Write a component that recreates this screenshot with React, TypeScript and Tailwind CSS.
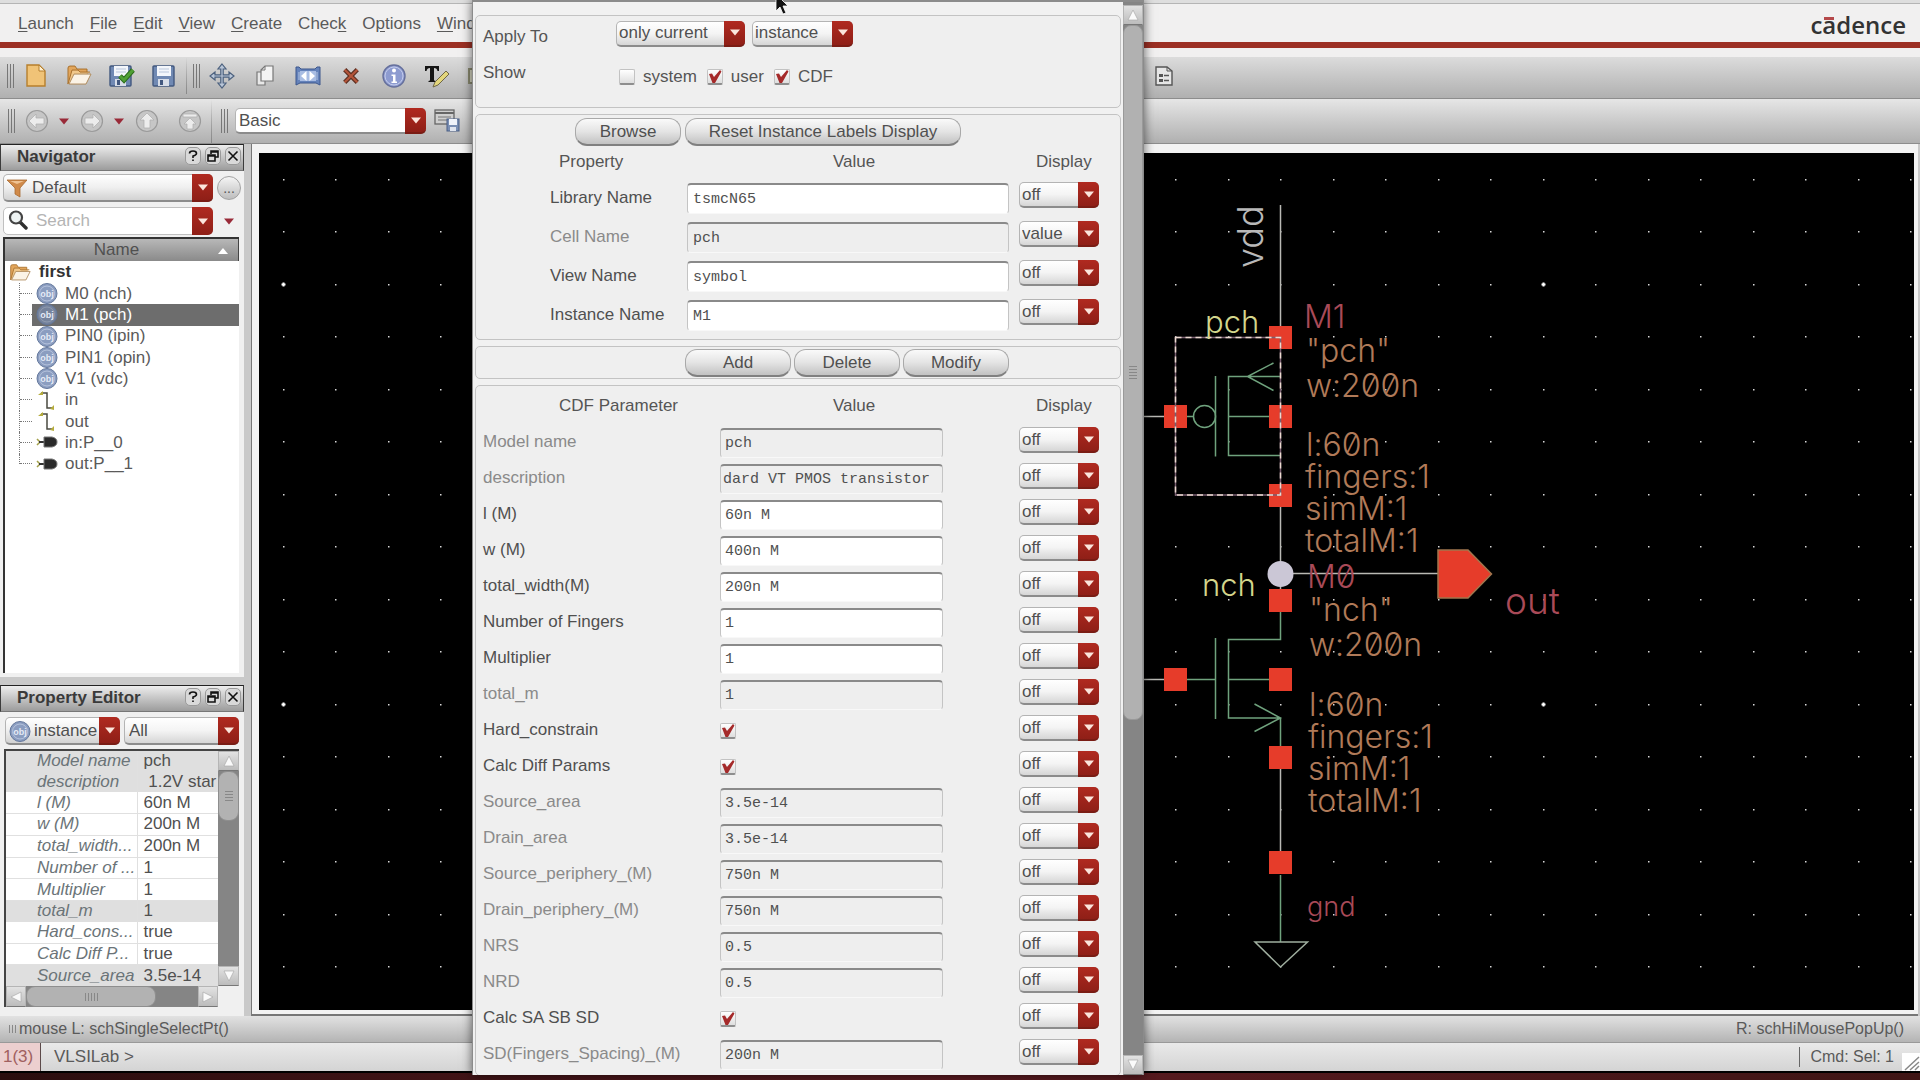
import React, { useState } from 'react';

type Param = {
  label: string;
  value?: string;
  disabled?: boolean;
  check?: boolean;
  display?: string;
};

const MENUS: [string, number][] = [
  ['Launch', 0],
  ['File', 0],
  ['Edit', 0],
  ['View', 0],
  ['Create', 0],
  ['Check', 4],
  ['Options', 1],
  ['Wind', 0],
];

const PROPERTIES: Param[] = [
  { label: 'Library Name', value: 'tsmcN65' },
  { label: 'Cell Name', value: 'pch', disabled: true, display: 'value' },
  { label: 'View Name', value: 'symbol' },
  { label: 'Instance Name', value: 'M1' },
];

const CDF_PARAMS: Param[] = [
  { label: 'Model name', value: 'pch', disabled: true },
  { label: 'description', value: 'dard VT PMOS transistor', disabled: true },
  { label: 'l (M)', value: '60n M' },
  { label: 'w (M)', value: '400n M' },
  { label: 'total_width(M)', value: '200n M' },
  { label: 'Number of Fingers', value: '1' },
  { label: 'Multiplier', value: '1' },
  { label: 'total_m', value: '1', disabled: true },
  { label: 'Hard_constrain', check: true },
  { label: 'Calc Diff Params', check: true },
  { label: 'Source_area', value: '3.5e-14', disabled: true },
  { label: 'Drain_area', value: '3.5e-14', disabled: true },
  { label: 'Source_periphery_(M)', value: '750n M', disabled: true },
  { label: 'Drain_periphery_(M)', value: '750n M', disabled: true },
  { label: 'NRS', value: '0.5', disabled: true },
  { label: 'NRD', value: '0.5', disabled: true },
  { label: 'Calc SA SB SD', check: true },
  { label: 'SD(Fingers_Spacing)_(M)', value: '200n M', disabled: true },
];

const TREE = [
  { name: 'M0 (nch)', kind: 'obj' },
  { name: 'M1 (pch)', kind: 'obj', selected: true },
  { name: 'PIN0 (ipin)', kind: 'obj' },
  { name: 'PIN1 (opin)', kind: 'obj' },
  { name: 'V1 (vdc)', kind: 'obj' },
  { name: 'in', kind: 'net' },
  { name: 'out', kind: 'net' },
  { name: 'in:P__0', kind: 'pin' },
  { name: 'out:P__1', kind: 'pin' },
];

const EDITOR_ROWS: [string, string, boolean][] = [
  ['Model name', 'pch', true],
  ['description', '\u00a01.2V star', true],
  ['l (M)', '60n M', false],
  ['w (M)', '200n M', false],
  ['total_width...', '200n M', false],
  ['Number of ...', '1', false],
  ['Multiplier', '1', false],
  ['total_m', '1', true],
  ['Hard_cons...', 'true', false],
  ['Calc Diff P...', 'true', false],
  ['Source_area', '3.5e-14', true],
];

/* ---------- small icons ---------- */

const ObjIcon = ({ dim = false }: { dim?: boolean }) => (
  <svg width="22" height="21" viewBox="0 0 22 21" className="shrink-0">
    <circle cx="11" cy="10.5" r="10" fill={dim ? '#76839c' : '#8b9dc0'} stroke="#64789c" strokeWidth="1" />
    <circle cx="11" cy="10.5" r="7.5" fill="none" stroke={dim ? '#8f9bb0' : '#b5c2dc'} strokeWidth="1" />
    <text x="11" y="14" textAnchor="middle" fontFamily="Liberation Sans, sans-serif" fontSize="9" fontWeight="bold" fill="#e4eaf5">obj</text>
  </svg>
);

const NetIcon = () => (
  <svg width="22" height="21" viewBox="0 0 22 21" className="shrink-0">
    <path d="M5 3H11V18H18" fill="none" stroke="#4a4a40" strokeWidth="1.5" />
    <path d="M2 5L7 1V5ZM14 19L18 15V20Z" fill="#b5ac3c" />
  </svg>
);

const PinIcon = () => (
  <svg width="22" height="21" viewBox="0 0 22 21" className="shrink-0">
    <path d="M1 7L4 10L1 13" fill="none" stroke="#a3a04a" strokeWidth="1.5" />
    <path d="M3 10H9" stroke="#333" strokeWidth="2" />
    <path d="M8 5H16Q21 6 21 10Q21 14 16 15H8Z" fill="#2a2a2a" stroke="#777" strokeWidth="1" />
  </svg>
);

const FolderIcon = ({ size = 22 }: { size?: number }) => (
  <svg width={size} height={size * 0.85} viewBox="0 0 26 22" className="shrink-0">
    <path d="M2 20V4Q2 2 4 2H9L11 5H21V10" fill="#e2a65c" stroke="#a8702c" strokeWidth="1" />
    <path d="M2 20L6 6H12L14 8H24" fill="#f1c88b" stroke="#a8702c" strokeWidth="1" />
    <path d="M3 20L8 10H25L20 20Z" fill="#fbf3e6" stroke="#b08b5c" strokeWidth="1" />
  </svg>
);

const FileIcon = () => (
  <svg width="20" height="23" viewBox="0 0 20 23">
    <path d="M1 1H13L19 7V22H1Z" fill="#f0c377" stroke="#b67f2d" strokeWidth="1.4" />
    <path d="M13 1V7H19Z" fill="#fff0d0" stroke="#b67f2d" strokeWidth="1" />
  </svg>
);

const DiskIcon = ({ checked = false }: { checked?: boolean }) => (
  <svg width="26" height="24" viewBox="0 0 26 24">
    <rect x="1" y="2" width="21" height="20" rx="1" fill="#7089b3" stroke="#42587f" strokeWidth="1.4" />
    <rect x="5" y="2" width="14" height="10" fill="#f3f6fb" />
    <path d="M7 5H17M7 8H17" stroke="#b9c6db" strokeWidth="1" />
    <rect x="6" y="15" width="11" height="7" fill="#d7dde8" />
    <rect x="8" y="16" width="3" height="5" fill="#42587f" />
    {checked && <path d="M11 12L15 16L24 6" fill="none" stroke="#2c6b1c" strokeWidth="5" />}
    {checked && <path d="M11 12L15 16L24 6" fill="none" stroke="#4fa035" strokeWidth="3" />}
  </svg>
);

const MoveIcon = () => (
  <svg width="26" height="26" viewBox="0 0 26 26">
    <path
      d="M13 1L17 6H14.200V11.800H20V9L25 13L20 17V14.200H14.200V20H17L13 25L9 20H11.800V14.200H6V17L1 13L6 9V11.800H11.800V6H9Z"
      fill="#b9c6d8"
      stroke="#4c617e"
      strokeWidth="1.2"
    />
  </svg>
);

const CopyIcon = () => (
  <svg width="18" height="22" viewBox="0 0 18 22">
    <path d="M1 7H9V20H1Z" fill="#e8e8e8" stroke="#777" strokeWidth="1.2" />
    <path d="M5 5L9 1H17V16H5Z" fill="#f4f4f4" stroke="#777" strokeWidth="1.2" />
    <path d="M5 5H9V1" fill="none" stroke="#777" strokeWidth="1" />
  </svg>
);

const StretchIcon = () => (
  <svg width="26" height="20" viewBox="0 0 26 20">
    <path d="M1 1H4L6 3H20L22 1H25V19L21 17H5L1 19Z" fill="#6482ba" stroke="#3d578c" strokeWidth="1" />
    <path d="M4 6V14M22 6V14" stroke="#b8c8e4" strokeWidth="1" />
    <rect x="5" y="5" width="16" height="10" fill="#a9bde3" />
    <path d="M11.500 5V15L6 10ZM14.500 5V15L20 10Z" fill="#fff" />
  </svg>
);

const DeleteIcon = () => (
  <svg width="18" height="18" viewBox="0 0 20 20">
    <path d="M3 3L17 17M17 3L3 17" stroke="#5e3022" strokeWidth="5" />
    <path d="M3 3L17 17M17 3L3 17" stroke="#b4553a" strokeWidth="2.4" />
  </svg>
);

const InfoIcon = () => (
  <svg width="24" height="24" viewBox="0 0 24 24">
    <circle cx="12" cy="12" r="11" fill="#8d9bd0" stroke="#66709c" strokeWidth="1.4" />
    <circle cx="12" cy="12" r="9" fill="none" stroke="#c4cceb" strokeWidth="1" />
    <circle cx="12" cy="6.5" r="2" fill="#fff" />
    <path d="M9.5 10.5H13.5V17.5H15V19H9.5V17.5H11V12H9.5Z" fill="#fff" />
  </svg>
);

const EditTextIcon = () => (
  <svg width="26" height="26" viewBox="0 0 26 26">
    <path d="M1 3H15V8H13.5Q13 5 10 5V17Q10 18 12 18V19H4.500V18Q6 18 6 17V5Q3 5 2.500 8H1Z" fill="#151515" />
    <path d="M9 24L11 19L22 8L25 11L14 22Z" fill="#e3d67c" stroke="#6e6646" strokeWidth="1" />
  </svg>
);

const NavArrow = ({ d }: { d: string }) => (
  <svg width="24" height="24" viewBox="0 0 24 24">
    <circle cx="12" cy="12" r="10.500" fill="#c6c6c6" stroke="#9a9a9a" strokeWidth="1.2" />
    <path d={d} fill="#ececec" stroke="#adadad" strokeWidth="0.7" />
  </svg>
);

const FormSaveIcon = () => (
  <svg width="27" height="24" viewBox="0 0 27 24">
    <rect x="1" y="1" width="19" height="14" fill="#cfcfcf" stroke="#666" strokeWidth="1.3" />
    <path d="M1 4H20" stroke="#666" strokeWidth="2" />
    <path d="M4 8H17M4 11H13" stroke="#777" strokeWidth="1.2" />
    <rect x="13" y="10" width="12" height="12" fill="#7a8fb4" stroke="#4b5f85" strokeWidth="1" />
    <rect x="15" y="10" width="8" height="6" fill="#eff3fa" />
    <rect x="16" y="18" width="6" height="4" fill="#dfe4ee" />
  </svg>
);

const ReportIcon = () => (
  <svg width="18" height="20" viewBox="0 0 18 20">
    <path d="M1 1H12L17 5V19H1Z" fill="#e6e6e6" stroke="#555" strokeWidth="1.4" />
    <path d="M12 1V5H17" fill="none" stroke="#555" strokeWidth="1" />
    <path d="M4 8H8V11H4ZM4 13H8V16H4Z" fill="#555" />
    <path d="M9 9.500H14M9 14.500H14" stroke="#555" strokeWidth="1.5" />
  </svg>
);

const Triangle = ({ className }: { className: string }) => (
  <svg width="10" height="7" viewBox="0 0 10 7" className={className}>
    <path d="M0 0.500H10L5 6.500Z" fill="currentColor" />
  </svg>
);

/* ---------- controls ---------- */

const Select = ({
  label,
  value,
  className,
  field = 'bg-gradient-to-b from-white via-[#f4f4f4] to-[#d6d6d6] pl-1',
  icon,
}: {
  label: string;
  value: string;
  className: string;
  field?: string;
  icon?: React.ReactNode;
}) => (
  <span className={`relative flex shrink-0 ${className}`}>
    <select
      aria-label={label}
      defaultValue={value}
      className={`w-full h-full appearance-none rounded-[5px] border border-[#b4b4b4] border-b-2 border-b-[#8c8c8c] text-[17px] leading-5 text-[#505050] outline-none ${field}`}
    >
      <option>{value}</option>
    </select>
    <span className="pointer-events-none absolute inset-y-0 right-0 flex w-[21px] items-center justify-center rounded-r-[5px] border-b-2 border-[#7a1c14] bg-gradient-to-b from-[#b02a20] to-[#8f1f17] text-[#fbe5dc]">
      <Triangle className="block" />
    </span>
    {icon && <span className="pointer-events-none absolute inset-y-0 left-1 flex items-center">{icon}</span>}
  </span>
);

const CheckBox = ({ id, defaultChecked }: { id: string; defaultChecked: boolean }) => {
  const [on, setOn] = useState(defaultChecked);
  return (
    <span className="relative block h-4 w-4 shrink-0">
      <input
        id={id}
        type="checkbox"
        checked={on}
        onChange={() => setOn(!on)}
        className="block h-4 w-4 appearance-none rounded-[2px] border border-[#c2c2c2] border-b-2 border-b-[#8e8e8e] bg-gradient-to-b from-white to-[#dedede]"
      />
      {on && (
        <svg width="16" height="16" viewBox="0 0 16 16" className="pointer-events-none absolute inset-0">
          <path d="M2 5L5 4.500L7 8L13 1L14.500 2.500L8 14H5.500Z" fill="#a52a2a" />
        </svg>
      )}
    </span>
  );
};

const PillButton = ({ children, className }: { children: string; className: string }) => (
  <button
    className={`h-7 shrink-0 rounded-[12px] border border-[#a9a9a9] border-b-2 border-b-[#808080] bg-gradient-to-b from-[#fafafa] via-[#e4e4e4] to-[#c2c2c2] text-[17px] leading-5 text-[#505050] ${className}`}
  >
    {children}
  </button>
);

const Handle = () => (
  <span className="flex h-6 w-[7px] shrink-0 justify-between">
    <span className="w-px bg-[#777]" />
    <span className="w-px bg-[#777]" />
    <span className="w-px bg-[#777]" />
  </span>
);

const Tool = ({ name, children }: { name: string; children: React.ReactNode }) => (
  <button aria-label={name} className="flex h-8 w-[43px] shrink-0 items-center justify-center">
    {children}
  </button>
);

const MenuArrow = ({ name }: { name: string }) => (
  <button aria-label={name} className="flex w-3 shrink-0 justify-center text-[#992a38]">
    <Triangle className="block" />
  </button>
);

const DockTitle = ({ title }: { title: string }) => (
  <div className="flex h-[27px] shrink-0 items-start gap-1 border border-[#3c3c3c] border-t-[#222] border-b-[#777] bg-gradient-to-b from-[#eeeeee] to-[#9c9c9c] pl-4 pr-[2px] pt-[2px]">
    <h2 className="flex-1 text-[17px] font-bold leading-5 text-[#3a3a3a]">{title}</h2>
    {[
      ['Help', <path key="h" d="M5.500 6.500Q5.500 4 9 4Q12.500 4 12.500 6.500Q12.500 8 9 9V11M9 12.500V14" />],
      ['Float', <path key="f" d="M7 7V4H14V10H11M4 8H11V14H4ZM4 9H11M7 5H14" />],
      ['Close', <path key="c" d="M4.500 4.500L13.500 13.500M13.500 4.500L4.500 13.500" />],
    ].map(([name, icon]) => (
      <button
        key={name as string}
        aria-label={name as string}
        className="flex h-[18px] w-4 items-center justify-center rounded-[5px] border border-[#9a9a9a] bg-[#d9d9d9]"
      >
        <svg width="18" height="18" viewBox="0 0 18 18" fill="none" stroke="#111" strokeWidth="1.600" className="shrink-0">
          {icon}
        </svg>
      </button>
    ))}
  </div>
);

const ScrollButton = ({ name, d, className = 'h-5 w-full' }: { name: string; d: string; className?: string }) => (
  <button
    aria-label={name}
    className={`flex shrink-0 items-center justify-center border border-[#b5b5b5] border-b-[#777] bg-gradient-to-b from-[#e2e2e2] to-[#bcbcbc] ${className}`}
  >
    <svg width="12" height="12" viewBox="0 0 12 12" className="shrink-0">
      <path d={d} fill="#fafafa" stroke="#aaa" strokeWidth="0.700" />
    </svg>
  </button>
);

/* ---------- left docks ---------- */

const Navigator = () => (
  <section className="flex min-h-0 flex-1 flex-col bg-[#f0f0f0] pb-1">
    <DockTitle title="Navigator" />
    <div className="flex items-center gap-1 pl-[3px] pt-[3px]">
      <Select
        label="Filter"
        value="Default"
        className="h-7 w-[210px]"
        field="bg-gradient-to-b from-white via-[#efefef] to-[#d2d2d2] pl-[28px]"
        icon={
          <svg width="20" height="20" viewBox="0 0 20 20">
            <path d="M0 2H20L13 10V19L8 16V10Z" fill="#d08a4a" stroke="#a86a30" strokeWidth="0.800" />
            <path d="M3 3H17L10 6Z" fill="#f0c393" />
          </svg>
        }
      />
      <button aria-label="More filters" className="h-6 w-6 rounded-full border border-[#a2a2a2] bg-gradient-to-b from-[#f5f5f5] to-[#bdbdbd] text-[14px] leading-5 text-[#555]">
        ...
      </button>
    </div>
    <div className="flex items-center pl-[3px] pt-[5px]">
      <div className="relative flex h-7 w-[210px]">
        <input
          aria-label="Search"
          placeholder="Search"
          className="w-full rounded-[5px] border border-[#c0c0c0] bg-white pl-8 text-[17px] leading-5 outline-none placeholder:text-[#b4b4b4]"
        />
        <svg width="20" height="20" viewBox="0 0 20 20" className="absolute left-[5px] top-[3px]">
          <path d="M12 12L18 18" stroke="#2f2f2f" strokeWidth="3.400" strokeLinecap="round" />
          <circle cx="8" cy="7.500" r="6" fill="#eef3f3" stroke="#444" strokeWidth="2.200" />
        </svg>
        <button aria-label="Search history" className="absolute inset-y-0 right-0 flex w-[21px] items-center justify-center rounded-r-[5px] bg-gradient-to-b from-[#b02a20] to-[#8f1f17] text-[#fbe5dc]">
          <Triangle className="block" />
        </button>
      </div>
      <span className="ml-[10px] flex">
        <MenuArrow name="Search options" />
      </span>
    </div>
    <div className="ml-[3px] mr-[5px] mt-[2px] flex min-h-0 flex-1 flex-col border-l-2 border-t-2 border-[#333] bg-white">
      <div className="relative flex h-[22px] shrink-0 items-center justify-center border-r border-[#444] bg-gradient-to-b from-[#b8b8b8] to-[#8a8a8a] pr-[10px] text-[17px] leading-5 text-[#505050]">
        Name
        <svg width="12" height="8" viewBox="0 0 12 8" className="absolute right-[9px] top-2">
          <path d="M1 7H11L6 1Z" fill="#fff" />
        </svg>
      </div>
      <div className="flex h-[22px] shrink-0 items-center gap-2 pl-1 font-bold text-[#333]">
        <FolderIcon />
        <span className="text-[17px] leading-5">first</span>
      </div>
      <ul className="grid h-[192px] shrink-0 auto-rows-fr">
        {TREE.map((n, i) => (
          <li key={n.name} className="flex pl-[14px]">
            <span className={`w-[13px] border-l border-dotted border-[#777] ${i === TREE.length - 1 ? 'h-1/2' : 'h-full'}`}>
              <span className={`block border-b border-dotted border-[#777] ${i === TREE.length - 1 ? 'h-full' : 'h-1/2'}`} />
            </span>
            <span className={`flex flex-1 items-center gap-[7px] pl-1 text-[17px] leading-5 ${n.selected ? 'bg-[#6d6d6d] text-white' : 'text-[#5a5a5a]'}`}>
              {n.kind === 'obj' && <ObjIcon dim={n.selected} />}
              {n.kind === 'net' && <NetIcon />}
              {n.kind === 'pin' && <PinIcon />}
              {n.name}
            </span>
          </li>
        ))}
      </ul>
    </div>
  </section>
);

const PropertyEditor = () => (
  <section className="flex h-[331px] shrink-0 flex-col bg-[#f0f0f0]">
    <DockTitle title="Property Editor" />
    <div className="flex gap-1 pl-[5px] pt-[5px]">
      <Select
        label="Object type"
        value="instance"
        className="h-7 w-[115px]"
        field="bg-gradient-to-b from-white via-[#efefef] to-[#d2d2d2] pl-[28px]"
        icon={<ObjIcon />}
      />
      <Select label="Filter properties" value="All" className="h-7 w-[115px]" />
    </div>
    <div className="ml-1 mr-[5px] mt-1 border-l-2 border-t-2 border-[#444]">
      <div className="flex">
        <table className="h-[235px] flex-1 table-fixed border-collapse text-[17px] leading-5">
          <tbody>
            {EDITOR_ROWS.map(([name, value, grey]) => (
              <tr key={name} className={grey ? 'bg-[#dfdfdf]' : 'border-b border-[#e0e0e0] bg-white'}>
                <th scope="row" className="w-[131px] overflow-hidden whitespace-nowrap border-r border-[#e0e0e0] p-0 pl-[31px] text-left font-normal italic text-[#6b7478]">
                  {name}
                </th>
                <td className="overflow-hidden whitespace-nowrap p-0 pl-[6px] text-[#505050]">{value}</td>
              </tr>
            ))}
          </tbody>
        </table>
        <div className="flex w-[21px] shrink-0 flex-col bg-[#858585]">
          <ScrollButton name="Scroll up" d="M1 11H11L6 1Z" />
          <div className="flex h-[50px] flex-col items-center justify-center gap-[2px] rounded-[9px] border border-[#8e8e8e] bg-[#b2b2b2]">
            {[0, 1, 2, 3].map((i) => (
              <span key={i} className="h-px w-2 bg-[#888]" />
            ))}
          </div>
          <div className="flex-1" />
          <ScrollButton name="Scroll down" d="M1 1H11L6 11Z" />
        </div>
      </div>
      <div className="mr-[21px] flex h-[21px] bg-[#858585]">
        <ScrollButton name="Scroll left" d="M11 1V11L1 6Z" className="h-full w-5" />
        <div className="flex w-[130px] items-center justify-center gap-[2px] rounded-[9px] border border-[#8e8e8e] bg-[#b2b2b2]">
          {[0, 1, 2, 3, 4].map((i) => (
            <span key={i} className="h-2 w-px bg-[#888]" />
          ))}
        </div>
        <div className="flex-1" />
        <ScrollButton name="Scroll right" d="M1 1V11L11 6Z" className="h-full w-5" />
      </div>
    </div>
  </section>
);

/* ---------- schematic ---------- */

const STEP = 52.5;

const GridDots = () => {
  const dots = [];
  for (let r = 0; r < 16; r++) {
    for (let c = 0; c < 32; c++) {
      const major = c % 24 === 0 && (r === 2 || r === 10);
      const x = Math.floor(283 + c * STEP);
      const y = Math.floor(179 + r * STEP);
      dots.push(
        major ? (
          <path key={`${r}-${c}`} d={`M${x - 1.5} ${y + 0.5}h4M${x + 0.5} ${y - 1.5}v4`} stroke="#fff" strokeWidth="2" />
        ) : (
          <rect key={`${r}-${c}`} x={x} y={y} width="1.500" height="1.500" fill="#d8d8d8" />
        )
      );
    }
  }
  return <>{dots}</>;
};

const DEVICE_TEXT: [number, number, string][] = [
  [1306, 362, '"pch"'],
  [1306, 397, 'w:200n'],
  [1306, 456, 'l:60n'],
  [1305, 488, 'fingers:1'],
  [1305, 520, 'simM:1'],
  [1305, 552, 'totalM:1'],
  [1309, 621, '"nch"'],
  [1309, 656, 'w:200n'],
  [1309, 716, 'l:60n'],
  [1308, 748, 'fingers:1'],
  [1308, 780, 'simM:1'],
  [1308, 812, 'totalM:1'],
];

const TERMINALS = [
  [1281, 338],
  [1281, 417],
  [1281, 496],
  [1176, 417],
  [1281, 601],
  [1281, 680],
  [1176, 680],
  [1281, 758],
  [1281, 863],
];

const Schematic = () => (
  <svg width="100%" height="100%" className="block font-['Inter','Noto_Sans',sans-serif] font-light" role="img" aria-label="Schematic">
    <g transform="translate(-259 -153)">
      <GridDots />
      <g fill="none" stroke="#b9b9b4" strokeWidth="1.500">
        <path d="M1280.500 205V338M1280.500 496V601M1280.500 573.500H1438M1280.500 758V863M1100 416.500H1176M1100 679.500H1176" />
      </g>
      <g fill="none" stroke="#6fa27d" strokeWidth="1.500">
        <path d="M1187 416.500H1193.500M1215.500 376V456.500M1280.500 376.500H1228.500V455.500H1280.500M1228.500 416.500H1270M1273.500 363L1247.500 376.500L1273.500 390.500" />
        <circle cx="1204.500" cy="416.500" r="11" />
        <path d="M1280.500 601V639.500H1228.500V718H1280.500V758M1215.500 638V719M1187 679.500H1215.500M1228.500 679.500H1270M1254.500 704L1280.500 718L1254.500 731.500" />
        <path d="M1280.500 875V942" />
      </g>
      <path d="M1255 942H1307.500L1280.500 967Z" fill="none" stroke="#9fae9f" strokeWidth="1.500" />
      {TERMINALS.map(([x, y]) => (
        <rect key={`${x}-${y}`} x={x - 12} y={y - 12} width="23" height="23" fill="#e63c2a" />
      ))}
      <rect x="1175.500" y="337.500" width="105" height="157.500" fill="none" stroke="#7a5f72" strokeWidth="1.500" />
      <rect x="1175.500" y="337.500" width="105" height="157.500" fill="none" stroke="#ecd9cf" strokeWidth="1.500" strokeDasharray="6 4" />
      <circle cx="1280.500" cy="574" r="13" fill="#cbc7d6" />
      <path d="M1438 550H1468L1491.500 574L1468 598H1438Z" fill="#e63c2a" stroke="#a0764e" strokeWidth="1.500" />
      <g style={{ fontFeatureSettings: '"zero"' }}>
        <g fill="#a94a58" fontSize="32">
          <text x="1304" y="328">M1</text>
          <text x="1307" y="588">M0</text>
          <text x="1505" y="614" fontSize="37">out</text>
          <text x="1307" y="916" fontSize="27">gnd</text>
        </g>
        <g fill="#b07a58" fontSize="32">
          {DEVICE_TEXT.map(([x, y, t]) => (
            <text key={y} x={x} y={y}>{t}</text>
          ))}
        </g>
        <g fill="#d3d68c" fontSize="31">
          <text x="1205" y="333">pch</text>
          <text x="1202" y="596">nch</text>
        </g>
        <text transform="translate(1263 268) rotate(-90)" fill="#b9b9b9" fontSize="36">vdd</text>
      </g>
    </g>
  </svg>
);

/* ---------- edit properties dialog ---------- */

const FORM_FIELD = 'bg-gradient-to-b from-white via-[#f4f4f4] to-[#d6d6d6] pl-[2px]';

const ParamRow = ({ param, wide = false }: { param: Param; wide?: boolean }) => {
  const id = `param-${param.label.replace(/\W+/g, '-')}`;
  return (
    <div className={`flex items-start ${wide ? 'h-[39px] pl-[74px]' : 'h-9 pl-[7px]'}`}>
      <label
        htmlFor={id}
        className={`shrink-0 whitespace-nowrap text-[17px] leading-5 ${wide ? 'w-[137px] pt-[6px]' : 'w-[237px] pt-[5px]'} ${param.disabled ? 'text-[#8a8a8a]' : 'text-[#505050]'}`}
      >
        {param.label}
      </label>
      {param.check ? (
        <span className="flex w-[223px] shrink-0 pt-2">
          <CheckBox id={id} defaultChecked />
        </span>
      ) : (
        <input
          id={id}
          defaultValue={param.value}
          readOnly={param.disabled}
          className={`mt-px shrink-0 rounded-[4px] border border-x-[#c4c4c4] border-t-2 border-t-[#8a8a8a] border-b-[#f8f8f8] font-['Liberation_Mono',monospace] text-[15px] leading-5 text-[#505050] outline-none ${wide ? 'h-[31px] w-[322px] pl-[5px]' : 'h-[30px] w-[223px]'} ${wide ? '' : param.label === 'description' ? 'pl-[2px]' : 'pl-1'} ${param.disabled ? 'bg-[#eeeeee]' : 'bg-white'}`}
        />
      )}
      <Select
        label={`${param.label} display`}
        value={param.display ?? 'off'}
        className={`h-[26px] w-20 ${wide ? 'ml-[10px]' : 'ml-[76px]'}`}
        field={FORM_FIELD}
      />
    </div>
  );
};

const PANEL = 'rounded-[5px] border border-[#c3c3c3] bg-[#efefef]';

const Headings = ({ first }: { first: string }) => (
  <div className="flex pl-[83px] text-[17px] leading-5 text-[#555]">
    <span className="w-[274px]">{first}</span>
    <span className="w-[203px]">Value</span>
    <span>Display</span>
  </div>
);

const PropertiesDialog = () => (
  <form
    aria-label="Edit Object Properties"
    className="absolute bottom-[5px] left-[472px] top-0 flex w-[672px] overflow-hidden border-x border-t-2 border-[#8b8b8b] bg-[#f1f1f1] shadow-[0_0_10px_rgba(0,0,0,0.6)]"
  >
    <div className="flex min-w-0 flex-1 flex-col gap-[6px] pl-[2px] pr-[2px] pt-[13px]">
      <div className={`${PANEL} h-[93px] shrink-0 pl-[7px] pt-1`}>
        <div className="flex items-center">
          <span className="w-[133px] pt-[7px] text-[17px] leading-5 text-[#555]">Apply To</span>
          <Select label="Apply to scope" value="only current" className="h-[26px] w-[129px]" field={FORM_FIELD} />
          <span className="ml-[7px]">
            <Select label="Apply to kind" value="instance" className="h-[26px] w-[101px]" field={FORM_FIELD} />
          </span>
        </div>
        <div className="flex pt-4 text-[17px] leading-5 text-[#555]">
          <span className="w-[136px]">Show</span>
          <div className="flex gap-[10px] pt-1">
            <label htmlFor="show-system" className="flex items-center gap-2">
              <CheckBox id="show-system" defaultChecked={false} />
              system
            </label>
            <label htmlFor="show-user" className="flex items-center gap-2">
              <CheckBox id="show-user" defaultChecked />
              user
            </label>
            <label htmlFor="show-cdf" className="flex items-center gap-2">
              <CheckBox id="show-cdf" defaultChecked />
              CDF
            </label>
          </div>
        </div>
      </div>

      <div className={`${PANEL} h-[226px] shrink-0 pt-[3px]`}>
        <div className="flex gap-1 pl-[99px]">
          <PillButton className="w-[106px]">Browse</PillButton>
          <PillButton className="w-[276px]">Reset Instance Labels Display</PillButton>
        </div>
        <div className="pb-[10px] pt-[6px]">
          <Headings first="Property" />
        </div>
        {PROPERTIES.map((p) => (
          <ParamRow key={p.label} param={p} wide />
        ))}
      </div>

      <div className={`${PANEL} flex h-[33px] shrink-0 gap-[3px] pl-[209px] pt-[2px]`}>
        <PillButton className="w-[106px]">Add</PillButton>
        <PillButton className="w-[106px]">Delete</PillButton>
        <PillButton className="w-[106px]">Modify</PillButton>
      </div>

      <div className={`${PANEL} flex-1 pt-[10px]`}>
        <div className="pb-[11px]">
          <Headings first="CDF Parameter" />
        </div>
        {CDF_PARAMS.map((p) => (
          <ParamRow key={p.label} param={p} />
        ))}
      </div>
    </div>
    <div className="flex w-5 shrink-0 flex-col bg-[#858585] pt-[3px]">
      <ScrollButton name="Scroll up" d="M1 11H11L6 1Z" />
      <div className="flex h-[695px] flex-col items-center justify-center gap-[2px] rounded-[8px] border border-[#999] bg-[#b1b1b1]">
        {[0, 1, 2, 3, 4].map((i) => (
          <span key={i} className="h-px w-2 bg-[#888]" />
        ))}
      </div>
      <div className="flex-1" />
      <ScrollButton name="Scroll down" d="M1 1H11L6 11Z" />
    </div>
  </form>
);

/* ---------- window ---------- */

const TOOLBAR = 'flex shrink-0 items-center border-b border-[#8d8d8d]';

const App: React.FC = () => {
  return (
    <div className="relative flex h-screen flex-col overflow-hidden bg-[#c9c9c9] font-['Liberation_Sans',Arial,sans-serif]">
      <header className="shrink-0 bg-[#f1f0f0]">
        <div className="h-1 border-b border-[#b5b5b5] bg-[#dedede]" />
        <div className="flex h-[38px] items-center justify-between pl-[18px] pr-[14px] pt-[2px]">
          <nav className="flex gap-4 text-[17px] leading-5 text-[#5a5a5a]">
            {MENUS.map(([name, key]) => (
              <button key={name}>
                {name.slice(0, key)}
                <span className="underline underline-offset-2">{name[key]}</span>
                {name.slice(key + 1)}
              </button>
            ))}
          </nav>
          <span className="pt-[2px] font-['Open_Sans','Noto_Sans',sans-serif] text-[24px] font-semibold leading-8 text-[#333]">
            c
            <span className="relative">
              ā<span className="absolute inset-x-[2px] top-[9px] h-[3px] bg-[#b5484a]" />
            </span>
            dence
          </span>
        </div>
        <div className="h-[6px] bg-[#9c3024]" />
        <div className="h-[9px]" />
      </header>

      <div className={`${TOOLBAR} h-[42px] bg-gradient-to-b from-[#dcdcdc] to-[#b0b0b0] pb-1 pl-[7px]`}>
        <Handle />
        <Tool name="New"><FileIcon /></Tool>
        <Tool name="Open"><FolderIcon size={26} /></Tool>
        <Tool name="Check and Save"><DiskIcon checked /></Tool>
        <Tool name="Save"><DiskIcon /></Tool>
        <span className="mr-[6px] h-full w-px bg-gradient-to-b from-transparent to-[#888]" />
        <Handle />
        <Tool name="Move"><MoveIcon /></Tool>
        <Tool name="Copy"><CopyIcon /></Tool>
        <Tool name="Stretch"><StretchIcon /></Tool>
        <Tool name="Delete"><DeleteIcon /></Tool>
        <Tool name="Properties"><InfoIcon /></Tool>
        <Tool name="Edit Text"><EditTextIcon /></Tool>
        <Tool name="Form">
          <span className="block h-4 w-6 border-2 border-[#8a8a70] bg-[#d5d5c0]" />
        </Tool>
        <span className="ml-[641px]">
          <Tool name="Report"><ReportIcon /></Tool>
        </span>
      </div>

      <div className={`${TOOLBAR} h-[45px] bg-gradient-to-b from-[#e6e6e6] to-[#b0b0b0] pl-2`}>
        <Handle />
        <Tool name="Back"><NavArrow d="M4 12L11 5V9H19V15H11V19Z" /></Tool>
        <MenuArrow name="Back history" />
        <Tool name="Forward"><NavArrow d="M20 12L13 5V9H5V15H13V19Z" /></Tool>
        <MenuArrow name="Forward history" />
        <Tool name="Up"><NavArrow d="M12 4L19 11H15V19H9V11H5Z" /></Tool>
        <Tool name="Top"><NavArrow d="M5 5H19V8H5ZM12 9L18 15H15V20H9V15H6Z" /></Tool>
        <span className="mr-[9px] h-full w-px bg-gradient-to-b from-transparent to-[#888]" />
        <Handle />
        <span className="ml-[7px] flex">
          <Select label="Workspace" value="Basic" className="h-[26px] w-[191px]" field="bg-white pl-[3px]" />
        </span>
        <Tool name="Save Workspace"><FormSaveIcon /></Tool>
      </div>

      <main className="flex min-h-0 flex-1">
        <aside className="flex w-[244px] shrink-0 flex-col gap-2">
          <Navigator />
          <PropertyEditor />
        </aside>
        <div className="ml-[7px] mr-[2px] min-w-0 flex-1 border-b-2 border-l border-[#777] bg-[#f3f3f3] pb-1 pl-[7px] pr-1 pt-[9px]">
          <div className="h-full bg-black">
            <Schematic />
          </div>
        </div>
      </main>

      <footer className="shrink-0 text-[17px] leading-5 text-[#5a5a5a]">
        <div className="flex h-[27px] items-center justify-between border-b border-[#999] bg-gradient-to-b from-[#e2e2e2] to-[#b4b4b4] pl-[9px] pr-4 text-[16px]">
          <div className="flex items-center gap-[3px]">
            <span className="flex h-2 w-[7px] justify-between">
              <span className="w-px bg-[#888]" />
              <span className="w-px bg-[#888]" />
              <span className="w-px bg-[#888]" />
            </span>
            mouse L: schSingleSelectPt()
          </div>
          <span>R: schHiMousePopUp()</span>
        </div>
        <div className="flex h-7 items-center bg-gradient-to-b from-[#e9e9e9] to-[#d4d4d4]">
          <span className="flex h-full w-[41px] items-center border-r border-[#5c4a4a] bg-[#eccfcf] pl-[3px] text-[#a06060]">1(3)</span>
          <span className="flex-1 pl-[13px]">VLSILab &gt;</span>
          <span className="border-l border-[#666] pl-[10px] text-[16px]">Cmd: Sel: 1</span>
          <svg width="18" height="18" viewBox="0 0 18 18" className="ml-2 self-end bg-white">
            <path d="M3 17L17 4M8 17L17 9M13 17L17 13" stroke="#888" strokeWidth="1.500" />
          </svg>
        </div>
        <div className="h-[9px] border-t-2 border-black bg-gradient-to-r from-[#2a0d0e] via-[#5a1a20] to-[#3f1515]" />
      </footer>

      <PropertiesDialog />

      <svg width="14" height="22" viewBox="0 0 14 22" className="pointer-events-none absolute -top-[6px] left-[775px]">
        <path d="M1 0V17L5 13L8 20L11 19L8 12H13Z" fill="#111" stroke="#fff" strokeWidth="0.800" />
      </svg>
    </div>
  );
};

export default App;
